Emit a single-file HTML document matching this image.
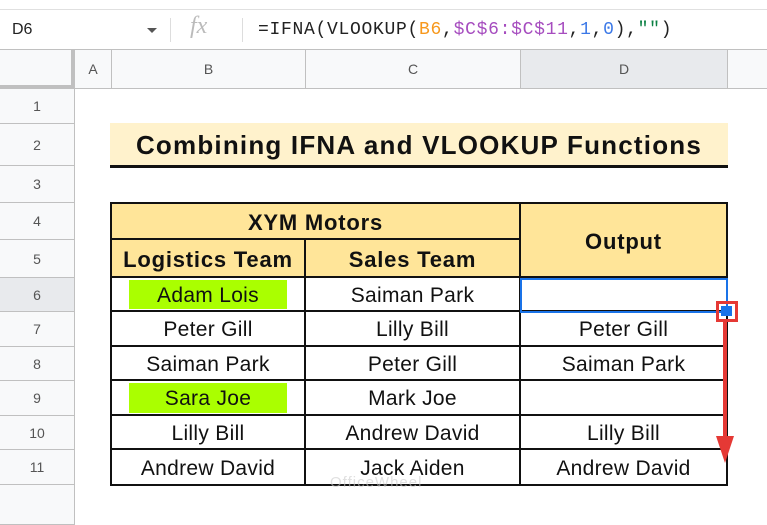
<!DOCTYPE html><html><head><style>
*{margin:0;padding:0;box-sizing:border-box}
body{width:767px;height:522px;background:#fff;position:relative;overflow:hidden;font-family:"Liberation Sans",Arial,sans-serif}
.a{position:absolute}
.rh{position:absolute;left:0;width:75px;background:#f8f9fa;border-bottom:1px solid #c0c0c0;border-right:1px solid #c0c0c0;color:#555;font-size:14px;display:flex;align-items:center;justify-content:center}
.ch{position:absolute;top:50px;height:39px;background:#f8f9fa;border-right:1px solid #c0c0c0;border-bottom:1px solid #c0c0c0;color:#555;font-size:14px;display:flex;align-items:center;justify-content:center}
.c{position:absolute;display:flex;align-items:center;justify-content:center;font-size:21px;letter-spacing:0.3px;padding-top:3px;color:#111;border-right:2px solid #111;border-bottom:2px solid #111}
.h{background:#ffe599;font-weight:bold;font-size:22px;letter-spacing:0.8px}
</style></head><body>
<div class="a" style="left:0;top:0;width:767px;height:10px;background:#fff;border-bottom:1px solid #e0e0e0"></div>
<div class="a" style="left:0;top:10px;width:767px;height:40px;background:#fff;border-bottom:1px solid #c0c0c0"></div>
<div class="a" style="left:12px;top:21px;font-size:16px;color:#222">D6</div>
<div class="a" style="left:147px;top:28px;width:0;height:0;border-left:5px solid transparent;border-right:5px solid transparent;border-top:5px solid #555"></div>
<div class="a" style="left:170px;top:18px;width:1px;height:24px;background:#ddd"></div>
<div class="a" style="left:190px;top:13px;font-size:24px;font-style:italic;color:#bbb;font-family:'Liberation Serif',serif">fx</div>
<div class="a" style="left:242px;top:18px;width:1px;height:24px;background:#ddd"></div>
<div class="a" style="left:258px;top:20px;font-size:18px;font-family:'Liberation Mono',monospace;color:#222;letter-spacing:0.7px">=IFNA(VLOOKUP(<span style="color:#f7981d">B6</span>,<span style="color:#a64dbf">$C$6:$C$11</span>,<span style="color:#3b78e7">1</span>,<span style="color:#3b78e7">0</span>),<span style="color:#0b8043">""</span>)</div>
<div class="a" style="left:0;top:50px;width:75px;height:39px;background:#f8f9fa;border-right:4px solid #c0c0c0;border-bottom:4px solid #c0c0c0"></div>
<div class="ch" style="left:75px;width:37px">A</div>
<div class="ch" style="left:112px;width:194px">B</div>
<div class="ch" style="left:306px;width:215px">C</div>
<div class="ch" style="left:521px;width:207px;background:#e8eaed">D</div>
<div class="ch" style="left:728px;width:40px"></div>
<div class="rh" style="top:89px;height:35px">1</div>
<div class="rh" style="top:124px;height:42px">2</div>
<div class="rh" style="top:166px;height:37px">3</div>
<div class="rh" style="top:203px;height:37px">4</div>
<div class="rh" style="top:240px;height:38px">5</div>
<div class="rh" style="top:278px;height:34px;background:#e8eaed">6</div>
<div class="rh" style="top:312px;height:35px">7</div>
<div class="rh" style="top:347px;height:34px">8</div>
<div class="rh" style="top:381px;height:35px">9</div>
<div class="rh" style="top:416px;height:34px">10</div>
<div class="rh" style="top:450px;height:35px">11</div>
<div class="rh" style="top:485px;height:40px"></div>
<div class="a" style="left:110px;top:123px;width:618px;height:45px;background:#fff2cc;border-bottom:3px solid #111;display:flex;align-items:center;justify-content:center;font-weight:bold;font-size:26px;letter-spacing:1.2px;padding-top:2px;color:#111">Combining IFNA and VLOOKUP Functions</div>
<div class="a" style="left:110px;top:202px;width:618px;height:284px;border-left:2px solid #111;border-top:2px solid #111"></div>
<div class="c h" style="left:112px;top:204px;width:409px;height:36px">XYM Motors</div>
<div class="c h" style="left:521px;top:204px;width:207px;height:74px">Output</div>
<div class="c h" style="left:112px;top:240px;width:194px;height:38px">Logistics Team</div>
<div class="c h" style="left:306px;top:240px;width:215px;height:38px">Sales Team</div>
<div class="c" style="left:112px;top:278px;width:194px;height:34px;padding-top:0"><span style="background:#aaff00;width:158px;height:29px;display:flex;align-items:center;justify-content:center;padding-top:3px">Adam Lois</span></div>
<div class="c" style="left:306px;top:278px;width:215px;height:34px">Saiman Park</div>
<div class="c" style="left:521px;top:278px;width:207px;height:34px"></div>
<div class="c" style="left:112px;top:312px;width:194px;height:35px">Peter Gill</div>
<div class="c" style="left:306px;top:312px;width:215px;height:35px">Lilly Bill</div>
<div class="c" style="left:521px;top:312px;width:207px;height:35px">Peter Gill</div>
<div class="c" style="left:112px;top:347px;width:194px;height:34px">Saiman Park</div>
<div class="c" style="left:306px;top:347px;width:215px;height:34px">Peter Gill</div>
<div class="c" style="left:521px;top:347px;width:207px;height:34px">Saiman Park</div>
<div class="c" style="left:112px;top:381px;width:194px;height:35px;padding-top:0"><span style="background:#aaff00;width:158px;height:30px;display:flex;align-items:center;justify-content:center;padding-top:3px">Sara Joe</span></div>
<div class="c" style="left:306px;top:381px;width:215px;height:35px">Mark Joe</div>
<div class="c" style="left:521px;top:381px;width:207px;height:35px"></div>
<div class="c" style="left:112px;top:416px;width:194px;height:34px">Lilly Bill</div>
<div class="c" style="left:306px;top:416px;width:215px;height:34px">Andrew David</div>
<div class="c" style="left:521px;top:416px;width:207px;height:34px">Lilly Bill</div>
<div class="c" style="left:112px;top:450px;width:194px;height:36px">Andrew David</div>
<div class="c" style="left:306px;top:450px;width:215px;height:36px">Jack Aiden</div>
<div class="c" style="left:521px;top:450px;width:207px;height:36px">Andrew David</div>
<div class="a" style="left:520px;top:278px;width:208px;height:35px;border:2px solid #1a73e8"></div>
<div class="a" style="left:716px;top:301px;width:22px;height:21px;border:3px solid #e53935"></div>
<div class="a" style="left:721px;top:306px;width:11px;height:10px;background:#1a73e8"></div>
<div class="a" style="left:723px;top:322px;width:4px;height:120px;background:#e53935"></div>
<div class="a" style="left:716px;top:436px;width:0;height:0;border-left:9px solid transparent;border-right:9px solid transparent;border-top:27px solid #e53935"></div>
<div class="a" style="left:330px;top:474px;font-size:15px;color:#ccc;letter-spacing:1px;opacity:.6">OfficeWheel</div>
</body></html>
